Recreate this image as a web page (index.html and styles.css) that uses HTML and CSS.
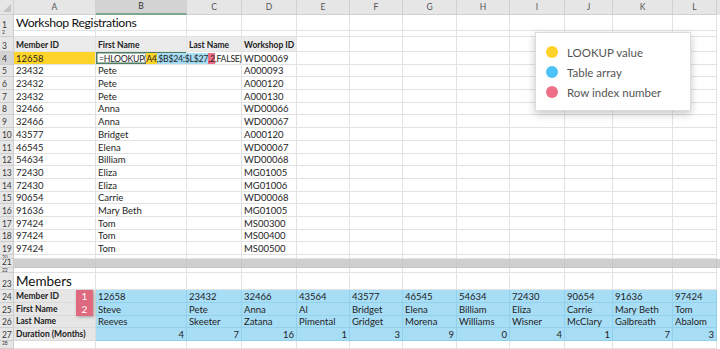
FILE: index.html
```html
<!DOCTYPE html>
<html>
<head>
<meta charset="utf-8">
<link rel="stylesheet" href="styles.css">
</head>
<body>
<div class="sheet">
  <div class="row hdr"><span class="corner"></span><span>A</span><span class="sel">B</span><span>C</span><span>D</span><span>E</span><span>F</span><span>G</span><span>H</span><span>I</span><span>J</span><span>K</span><span>L</span></div>
  <div class="row r1"><span class="h">1</span><span class="title t1">Workshop Registrations</span><span></span><span></span><span></span><span></span><span></span><span></span><span></span><span></span><span></span><span></span><span></span></div>
  <div class="row r2"><span class="h sq">2</span><span></span><span></span><span></span><span></span><span></span><span></span><span></span><span></span><span></span><span></span><span></span><span></span></div>
  <div class="row r3"><span class="h">3</span><span class="th">Member ID</span><span class="th">First Name</span><span class="th">Last Name</span><span class="th">Workshop ID</span><span></span><span></span><span></span><span></span><span></span><span></span><span></span><span></span></div>
  <div class="row rd"><span class="h sel">4</span><span class="yel">12658</span><span class="active">=HLOOKUP(<em class="hy">A4</em><em class="hb">,$B$24:$L$27</em><em class="hp">,2</em>,FALSE)</span><span></span><span>WD00069</span><span></span><span></span><span></span><span></span><span></span><span></span><span></span><span></span></div>
  <div class="row rd"><span class="h">5</span><span>23432</span><span>Pete</span><span></span><span>A000093</span><span></span><span></span><span></span><span></span><span></span><span></span><span></span><span></span></div>
  <div class="row rd"><span class="h">6</span><span>23432</span><span>Pete</span><span></span><span>A000120</span><span></span><span></span><span></span><span></span><span></span><span></span><span></span><span></span></div>
  <div class="row rd"><span class="h">7</span><span>23432</span><span>Pete</span><span></span><span>A000130</span><span></span><span></span><span></span><span></span><span></span><span></span><span></span><span></span></div>
  <div class="row rd"><span class="h">8</span><span>32466</span><span>Anna</span><span></span><span>WD00066</span><span></span><span></span><span></span><span></span><span></span><span></span><span></span><span></span></div>
  <div class="row rd"><span class="h">9</span><span>32466</span><span>Anna</span><span></span><span>WD00067</span><span></span><span></span><span></span><span></span><span></span><span></span><span></span><span></span></div>
  <div class="row rd"><span class="h">10</span><span>43577</span><span>Bridget</span><span></span><span>A000120</span><span></span><span></span><span></span><span></span><span></span><span></span><span></span><span></span></div>
  <div class="row rd"><span class="h">11</span><span>46545</span><span>Elena</span><span></span><span>WD00067</span><span></span><span></span><span></span><span></span><span></span><span></span><span></span><span></span></div>
  <div class="row rd"><span class="h">12</span><span>54634</span><span>Billiam</span><span></span><span>WD00068</span><span></span><span></span><span></span><span></span><span></span><span></span><span></span><span></span></div>
  <div class="row rd"><span class="h">13</span><span>72430</span><span>Eliza</span><span></span><span>MG01005</span><span></span><span></span><span></span><span></span><span></span><span></span><span></span><span></span></div>
  <div class="row rd"><span class="h">14</span><span>72430</span><span>Eliza</span><span></span><span>MG01006</span><span></span><span></span><span></span><span></span><span></span><span></span><span></span><span></span></div>
  <div class="row rd"><span class="h">15</span><span>90654</span><span>Carrie</span><span></span><span>WD00068</span><span></span><span></span><span></span><span></span><span></span><span></span><span></span><span></span></div>
  <div class="row rd"><span class="h">16</span><span>91636</span><span>Mary Beth</span><span></span><span>MG01005</span><span></span><span></span><span></span><span></span><span></span><span></span><span></span><span></span></div>
  <div class="row rd"><span class="h">17</span><span>97424</span><span>Tom</span><span></span><span>MS00300</span><span></span><span></span><span></span><span></span><span></span><span></span><span></span><span></span></div>
  <div class="row rd"><span class="h">18</span><span>97424</span><span>Tom</span><span></span><span>MS00400</span><span></span><span></span><span></span><span></span><span></span><span></span><span></span><span></span></div>
  <div class="row rd"><span class="h">19</span><span>97424</span><span>Tom</span><span></span><span>MS00500</span><span></span><span></span><span></span><span></span><span></span><span></span><span></span><span></span></div>
  <div class="row r20"><span class="h sq">20</span><span></span><span></span><span></span><span></span><span></span><span></span><span></span><span></span><span></span><span></span><span></span><span></span></div>
  <div class="row r21"><span class="h">21</span><span></span><span></span><span></span><span></span><span></span><span></span><span></span><span></span><span></span><span></span><span></span><span></span></div>
  <div class="row r22"><span class="h sq">22</span><span></span><span></span><span></span><span></span><span></span><span></span><span></span><span></span><span></span><span></span><span></span><span></span></div>
  <div class="row r23"><span class="h">23</span><span class="title t2">Members</span><span></span><span></span><span></span><span></span><span></span><span></span><span></span><span></span><span></span><span></span><span></span></div>
  <div class="row rm"><span class="h">24</span><span class="th lab badged">Member ID<span class="badge"><b>1</b><b>2</b></span></span><span class="bl">12658</span><span class="bl">23432</span><span class="bl">32466</span><span class="bl">43564</span><span class="bl">43577</span><span class="bl">46545</span><span class="bl">54634</span><span class="bl">72430</span><span class="bl">90654</span><span class="bl">91636</span><span class="bl">97424</span></div>
  <div class="row rm"><span class="h">25</span><span class="th lab">First Name</span><span class="bl">Steve</span><span class="bl">Pete</span><span class="bl">Anna</span><span class="bl">Al</span><span class="bl">Bridget</span><span class="bl">Elena</span><span class="bl">Billiam</span><span class="bl">Eliza</span><span class="bl">Carrie</span><span class="bl">Mary Beth</span><span class="bl">Tom</span></div>
  <div class="row rm"><span class="h">26</span><span class="th lab">Last Name</span><span class="bl">Reeves</span><span class="bl">Skeeter</span><span class="bl">Zatana</span><span class="bl">Pimental</span><span class="bl">Gridget</span><span class="bl">Morena</span><span class="bl">Williams</span><span class="bl">Wisner</span><span class="bl">McClary</span><span class="bl">Galbreath</span><span class="bl">Abalom</span></div>
  <div class="row rm"><span class="h">27</span><span class="th lab">Duration (Months)</span><span class="bl num">4</span><span class="bl num">7</span><span class="bl num">16</span><span class="bl num">1</span><span class="bl num">3</span><span class="bl num">9</span><span class="bl num">0</span><span class="bl num">4</span><span class="bl num">1</span><span class="bl num">7</span><span class="bl num">3</span></div>
  <div class="row r28"><span class="h sq">28</span><span></span><span></span><span></span><span></span><span></span><span></span><span></span><span></span><span></span><span></span><span></span><span></span></div>
</div>

<div class="legend">
  <div class="item"><span class="dot dy"></span>LOOKUP value</div>
  <div class="item"><span class="dot db"></span>Table array</div>
  <div class="item"><span class="dot dp"></span>Row index number</div>
</div>
</body>
</html>
```

FILE: styles.css
```css
html, body {
  margin: 0;
  padding: 0;
}
body {
  width: 720px;
  height: 349px;
  overflow: hidden;
  position: relative;
  background: #ffffff;
  font-family: Lato, "Open Sans", "Liberation Sans", sans-serif;
  color: #1e1e1e;
}
.sheet {
  display: flex;
  flex-direction: column;
}
.row {
  display: grid;
  grid-template-columns: 14px 82px 91px 55px 55px 53px 53px 54px 53px 55px 48px 60px 44px;
  flex: none;
}
.row > span {
  box-sizing: border-box;
  border-right: 1px solid #e2e2e2;
  border-bottom: 1px solid #e2e2e2;
  font-size: 9.5px;
  line-height: 11px;
  padding: 0 2px;
  white-space: nowrap;
  overflow: hidden;
  display: flex;
  align-items: flex-end;
  min-width: 0;
}

/* row heights */
.hdr { height: 15px; background: #e6e6e6; }
.r1 { height: 15px; }
.r2 { height: 7px; }
.r3 { height: 15px; }
.rd { height: 12.69px; }
.r20 { height: 4px; }
.r21 { height: 9px; background: #cfcfcf; }
.r22 { height: 5px; }
.r23 { height: 17px; }
.rm { height: 12.75px; }
.r28 { height: 8px; }

/* column header */
.hdr > span {
  background: #e6e6e6;
  border-color: #d0d0d0;
  color: #555;
  font-size: 8.5px;
  justify-content: center;
  align-items: center;
}
.hdr > .sel {
  background: #d3d3d3;
  border-bottom: 2px solid #7ea890;
  color: #333;
}
.hdr > .corner {
  position: relative;
  background: #e6e6e6;
}
.corner::after {
  content: "";
  position: absolute;
  right: 2px;
  bottom: 2px;
  border-left: 8px solid transparent;
  border-bottom: 8px solid #c4c4c4;
}

/* row header */
.row > .h {
  background: #e6e6e6;
  border-color: #cdcdcd;
  color: #3a3a3a;
  font-size: 8.5px;
  line-height: 10px;
  padding: 0 0 0 2px;
  letter-spacing: -0.2px;
}
.row > .h.sel { background: #d3d3d3; }
.row > .h.sq {
  font-size: 5px;
  line-height: 4px;
  align-items: flex-start;
}

.r21 > span {
  background: #cfcfcf;
  border-color: #c6c6c6;
}

/* titles */
.row > .title {
  overflow: visible;
  line-height: 15px;
  color: #111;
  padding-left: 2px;
  z-index: 1;
}
.row > .t1 {
  font-size: 12.3px;
  letter-spacing: -0.38px;
}
.row > .t2 {
  font-size: 13.5px;
  line-height: 16px;
}

/* table header cells */
.row > .th {
  background: #ebebeb;
  font-weight: bold;
  font-size: 8.5px;
  color: #222;
}
.row > .lab { background: #e6e6e6; border-color: #dadada; }

.row > .yel { background: #fed42b; }

.row > .active {
  overflow: visible;
  z-index: 1;
  box-shadow: inset 0 0 0 1.5px #4f7d63;
  padding-left: 3px;
  font-size: 8.7px;
  letter-spacing: -0.25px;
}
.active em {
  font-style: normal;
}
.hy { background: #fed42b; }
.hb { background: #a6dcf4; }
.hp { background: #ee6f88; }

/* blue table */
.row > .bl {
  background: #a8ddf6;
  border-color: #93d0ec;
}
.row > .num { justify-content: flex-end; }

/* badge */
.row > .badged {
  position: relative;
  overflow: visible;
}
.badge {
  position: absolute;
  right: 2px;
  top: 0;
  width: 17px;
  height: 26px;
  background: #df6a80;
  box-shadow: 1px 1px 3px rgba(0,0,0,0.3);
  display: flex;
  flex-direction: column;
  z-index: 3;
}
.badge b {
  flex: 1;
  display: flex;
  align-items: center;
  justify-content: center;
  color: #fff;
  font-weight: normal;
  font-size: 10px;
}

/* legend */
.legend {
  position: absolute;
  left: 535px;
  top: 32px;
  width: 156px;
  height: 79px;
  box-sizing: border-box;
  background: #ffffff;
  border: 1px solid #dcdcdc;
  box-shadow: 0 3px 8px rgba(0,0,0,0.22);
  padding-top: 9px;
  z-index: 5;
}
.item {
  height: 20px;
  display: flex;
  align-items: center;
  gap: 9px;
  padding-left: 10px;
  font-size: 11.5px;
  color: #555;
}
.dot {
  width: 12px;
  height: 12px;
  border-radius: 50%;
  flex: none;
}
.dy { background: #ffd22a; }
.db { background: #4dc4f6; }
.dp { background: #ee6f89; }
```
